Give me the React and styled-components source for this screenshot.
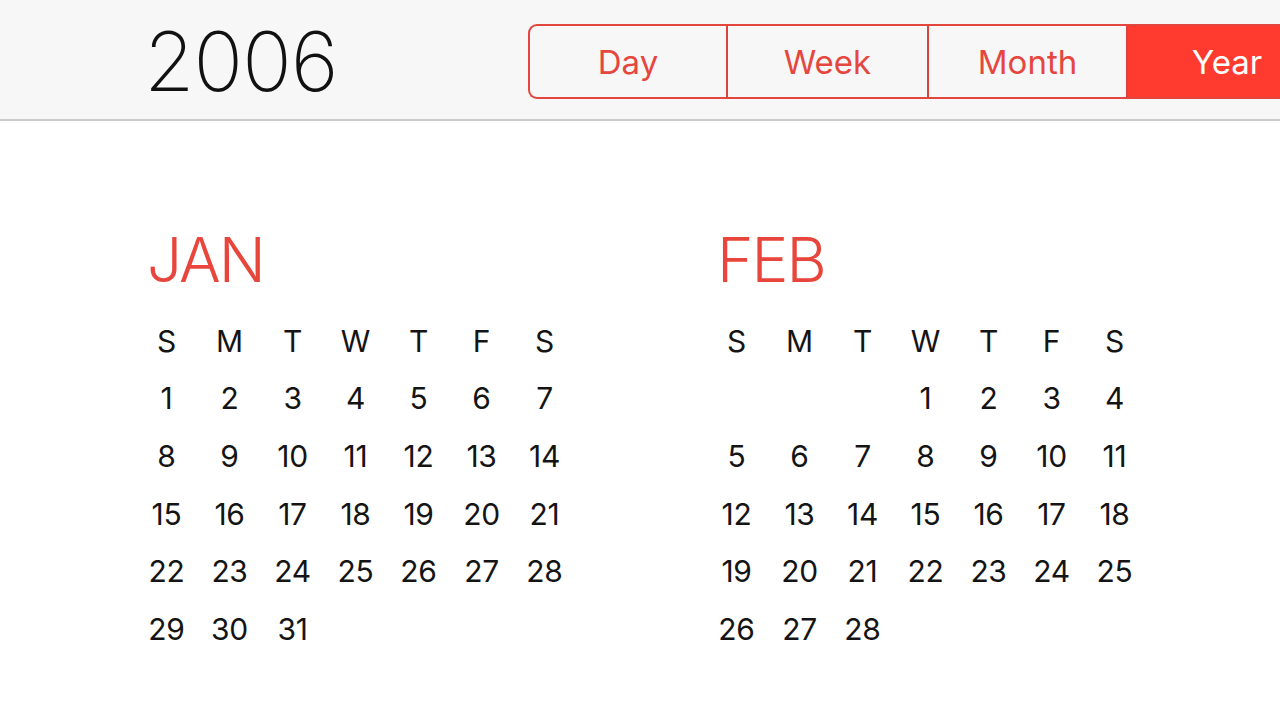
import styled, { createGlobalStyle } from "styled-components";

const GlobalStyle = createGlobalStyle`
  html, body {
    margin: 0;
    padding: 0;
    background: #ffffff;
    font-family: Inter, "Noto Sans", sans-serif;
    overflow: hidden;
  }
`;

const Page = styled.div`
  width: 1280px;
  height: 720px;
  overflow: hidden;
  background: #ffffff;
`;

const Header = styled.header`
  display: flex;
  align-items: flex-start;
  height: 119px;
  padding-left: 148px;
  background: #f7f7f7;
  border-bottom: 2px solid #cbcbcb;
  overflow: hidden;
`;

const YearTitle = styled.h1`
  flex: 0 0 384px;
  margin: 21px 0 0 -4px;
  font-size: 82px;
  line-height: 1;
  font-weight: 200;
  color: #111;
  letter-spacing: -1px;
`;

const Segments = styled.div`
  display: flex;
  flex-shrink: 0;
  margin-top: 24px;
  height: 75px;
  box-sizing: border-box;
  border: 2px solid #e4463d;
  border-right: none;
  border-radius: 9px 0 0 9px;
  overflow: hidden;
`;

const Segment = styled.div`
  box-sizing: border-box;
  width: ${(p) => p.$width}px;
  display: flex;
  align-items: center;
  justify-content: center;
  font-size: 33px;
  color: ${(p) => (p.$active ? "#fff" : "#e5473f")};
  background: ${(p) => (p.$active ? "#ff3b30" : "transparent")};
  & + & {
    border-left: 2px solid #d9453d;
  }
`;

const Main = styled.main`
  display: flex;
  gap: 129px;
  padding: 108px 0 0 135px;
`;

const Month = styled.section`
  display: flex;
  flex-direction: column;
`;

const MonthTitle = styled.h2`
  margin: 0 0 21px 12px;
  font-size: 62px;
  line-height: 1;
  font-weight: 300;
  color: #e8463c;
  letter-spacing: -2px;
`;

const Grid = styled.div`
  display: grid;
  grid-template-columns: repeat(7, 63px);
  grid-auto-rows: 57.6px;
`;

const Cell = styled.div`
  display: flex;
  align-items: center;
  justify-content: center;
  font-size: 30px;
  color: #141414;
  letter-spacing: -0.3px;
`;

const weekdays = ["S", "M", "T", "W", "T", "F", "S"];

const months = [
  { name: "JAN", offset: 0, days: 31 },
  { name: "FEB", offset: 3, days: 28 },
];

const MonthView = ({ name, offset, days }) => {
  const cells = [];
  for (let i = 0; i < offset; i++) cells.push(<Cell key={"e" + i} />);
  for (let d = 1; d <= days; d++) cells.push(<Cell key={d}>{d}</Cell>);
  return (
    <Month>
      <MonthTitle>{name}</MonthTitle>
      <Grid>
        {weekdays.map((w, i) => (
          <Cell key={"w" + i}>{w}</Cell>
        ))}
        {cells}
      </Grid>
    </Month>
  );
};

const App = () => {
  return (
    <Page>
      <GlobalStyle />
      <Header>
        <YearTitle>2006</YearTitle>
        <Segments>
          <Segment $width={196}>Day</Segment>
          <Segment $width={201}>Week</Segment>
          <Segment $width={199}>Month</Segment>
          <Segment $width={200} $active>
            Year
          </Segment>
        </Segments>
      </Header>
      <Main>
        {months.map((m) => (
          <MonthView key={m.name} {...m} />
        ))}
      </Main>
    </Page>
  );
};

export default App;
